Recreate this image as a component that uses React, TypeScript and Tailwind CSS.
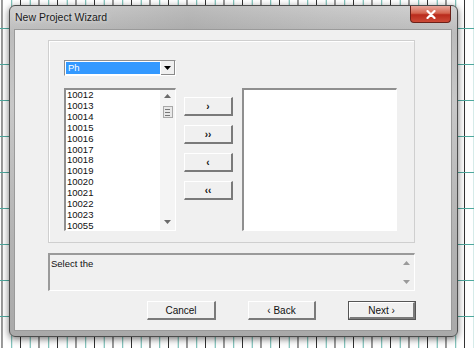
import React from "react";

const items = ["10012", "10013", "10014", "10015", "10016", "10017", "10018", "10019", "10020", "10021", "10022", "10023", "10055"];

function UpArrow({ color = "#6b6b6b" }: { color?: string }) {
  return (
    <svg width="7" height="4" viewBox="0 0 7 4">
      <path d="M0 4 L3.5 0 L7 4 Z" fill={color} />
    </svg>
  );
}

function DownArrow({ color = "#6b6b6b" }: { color?: string }) {
  return (
    <svg width="7" height="4" viewBox="0 0 7 4">
      <path d="M0 0 L7 0 L3.5 4 Z" fill={color} />
    </svg>
  );
}

function RaisedButton({ label, className = "" }: { label: React.ReactNode; className?: string }) {
  return (
    <div
      className={
        "flex items-center justify-center bg-[#f0f0f0] border-t border-l border-t-white border-l-white border-r-2 border-b-2 border-r-[#7a7a7a] border-b-[#7a7a7a] text-[#111] " +
        className
      }
    >
      {label}
    </div>
  );
}

export default function App() {
  return (
    <div className="w-[474px] h-[348px] overflow-hidden bg-white pl-[9px] pt-[5px] font-['Liberation_Sans',Arial,sans-serif] [background-image:linear-gradient(to_bottom,#4fa99e_1px,transparent_1px),linear-gradient(to_right,#2f2f2f_1px,transparent_1px,transparent_10px,#5fb2a8_10px,#5fb2a8_11px,transparent_11px)] [background-size:100%_36px,18.5px_100%] [background-position:0_28px,1.5px_0]">
      {/* window */}
      <div className="relative w-[449px] h-[332px] flex flex-col rounded-[6px] border border-[#4d4d4d] bg-[linear-gradient(to_bottom,#d2d2d2,#bcbcbc_8%,#c8c8c8_30%,#b3b3b3_70%,#a9a9a9)] shadow-[0_2px_7px_rgba(0,0,0,0.55)]">
        {/* title bar */}
        <div className="h-[23px] flex items-center pl-[5px] shrink-0 rounded-t-[5px] bg-[linear-gradient(to_right,transparent,rgba(120,120,120,0.25)_40%,rgba(150,150,150,0.15)_70%,transparent)]">
          <span className="text-[10.5px] text-[#1a1a1a] [text-shadow:0_0_4px_rgba(255,255,255,0.8)]">New Project Wizard</span>
        </div>
        <div className="absolute right-[6px] top-0 w-[41px] h-[17px] flex items-center justify-center rounded-b-[4px] border border-t-0 border-[#6b2018] bg-[linear-gradient(to_bottom,#e8a79c,#d4654f_45%,#b92b1c_55%,#cc4a37)]">
          <svg width="10" height="9" viewBox="0 0 10 9">
            <path d="M1.5 1 L8.5 8 M8.5 1 L1.5 8" stroke="white" strokeWidth="2.2" strokeLinecap="round" />
          </svg>
        </div>

        {/* client */}
        <div className="ml-[4px] mr-[5px] mb-[5px] flex-1 border border-[#9a9a9a] bg-[#f0f0f0] pl-[33px] pt-[10px] text-[9.5px]">
          {/* group box */}
          <div className="w-[367px] h-[203px] border border-[#cfcfcf] shadow-[inset_1px_1px_0_white] pl-[15px] pt-[19px]">
            {/* combo */}
            <div className="w-[112px] h-[16px] flex border-t border-l border-t-[#8f8f8f] border-l-[#8f8f8f] border-r border-b border-r-white border-b-white bg-white">
              <div className="flex-1 m-[1px] bg-[#3399ff] text-white pl-[2px] leading-[12px]">Ph</div>
              <div className="w-[14px] flex items-center justify-center bg-[#f0f0f0] border-r border-b border-r-[#8a8a8a] border-b-[#8a8a8a]">
                <DownArrow color="#000" />
              </div>
            </div>

            {/* lists */}
            <div className="mt-[12px] flex">
              <div className="w-[112px] h-[143px] flex border-t-2 border-l-2 border-t-[#8f8f8f] border-l-[#8f8f8f] border-r border-b border-r-white border-b-white bg-white">
                <div className="flex-1 overflow-hidden pl-[1px] leading-[10.9px] text-[#111]">
                  {items.map((it) => (
                    <div key={it}>{it}</div>
                  ))}
                </div>
                <div className="w-[15px] bg-[#f4f4f4] flex flex-col items-center pt-[4px] pb-[6px]">
                  <UpArrow />
                  <div className="mt-[8px] w-[10px] h-[12px] border border-[#a8a8a8] bg-[#e8e8e8] flex flex-col items-center justify-center gap-[2px]">
                    <div className="w-[5px] h-px bg-[#777]" />
                    <div className="w-[5px] h-px bg-[#777]" />
                    <div className="w-[5px] h-px bg-[#777]" />
                  </div>
                  <div className="flex-1" />
                  <DownArrow />
                </div>
              </div>

              <div className="ml-[8px] pt-[9px] flex flex-col gap-[9px]">
                <RaisedButton label="›" className="w-[49px] h-[19px] text-[10px] font-bold" />
                <RaisedButton label="››" className="w-[49px] h-[19px] text-[10px] font-bold" />
                <RaisedButton label="‹" className="w-[49px] h-[19px] text-[10px] font-bold" />
                <RaisedButton label="‹‹" className="w-[49px] h-[19px] text-[10px] font-bold" />
              </div>

              <div className="ml-[9px] w-[155px] h-[143px] border-t-2 border-l-2 border-t-[#8f8f8f] border-l-[#8f8f8f] border-r border-b border-r-white border-b-white bg-white" />
            </div>
          </div>

          {/* description */}
          <div className="mt-[10px] w-[367px] h-[38px] flex border-t-2 border-l-2 border-t-[#9a9a9a] border-l-[#9a9a9a] border-r border-b border-r-white border-b-white bg-[#f0f0f0]">
            <div className="flex-1 pl-[1px] pt-[2px] text-[#111]">Select the</div>
            <div className="w-[16px] flex flex-col items-center justify-between pt-[6px] pb-[6px]">
              <UpArrow color="#9a9a9a" />
              <DownArrow color="#9a9a9a" />
            </div>
          </div>

          {/* buttons */}
          <div className="mt-[10px] flex h-[19px] text-[10px]">
            <RaisedButton label="Cancel" className="ml-[99px] w-[69px] h-[19px]" />
            <RaisedButton label="‹ Back" className="ml-[32px] w-[68px] h-[19px]" />
            <div className="ml-[32px] w-[68px] h-[19px] border border-[#555]">
              <RaisedButton label="Next ›" className="w-full h-full" />
            </div>
          </div>
        </div>
      </div>
    </div>
  );
}
